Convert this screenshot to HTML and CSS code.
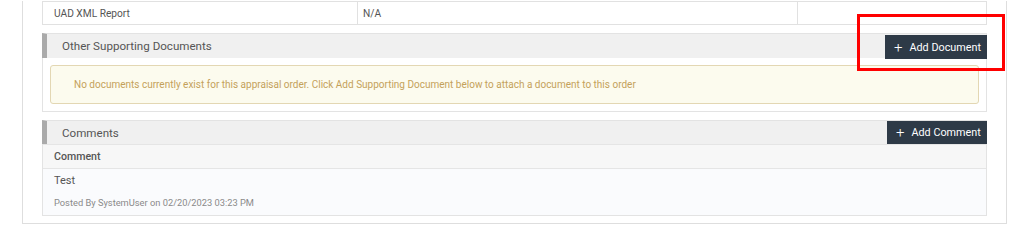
FILE: index.html
```html
<!DOCTYPE html>
<html>
<head>
<meta charset="utf-8">
<link rel="stylesheet" href="styles.css">
</head>
<body>
<div class="outer">
  <table class="docs">
    <tr>
      <td class="c1">UAD XML Report</td>
      <td class="c2">N/A</td>
      <td class="c3"></td>
    </tr>
  </table>

  <div class="panel docs-panel">
    <div class="panel-head">
      <span class="title">Other Supporting Documents</span>
      <button class="btn"><span class="plus">+</span>Add Document</button>
    </div>
    <div class="alert">No documents currently exist for this appraisal order. Click Add Supporting Document below to attach a document to this order</div>
  </div>

  <div class="panel comments-panel">
    <div class="panel-head">
      <span class="title">Comments</span>
      <button class="btn btn-comment"><span class="plus">+</span>Add Comment</button>
    </div>
    <div class="col-head">Comment</div>
    <div class="comment">
      <div class="comment-text">Test</div>
      <div class="comment-meta">Posted By SystemUser on 02/20/2023 03:23 PM</div>
    </div>
  </div>
</div>
<div class="highlight"></div>
</body>
</html>
```

FILE: styles.css
```css
html, body {
  margin: 0;
  padding: 0;
  background: #fff;
  font-family: Roboto, "Liberation Sans", Arial, sans-serif;
  color: #555;
}

.outer {
  margin-left: 22px;
  width: 945px;
  padding: 0 19px 7px 19px;
  border: 1px solid #dedede;
  border-top: none;
}

.docs {
  border-collapse: collapse;
  width: 945px;
  margin-top: 1px;
  font-size: 10.2px;
  table-layout: fixed;
}

.docs td {
  border: 1px solid #e1e1e1;
  height: 22px;
  padding: 0 0 0 11px;
  color: #555;
}

.docs .c1 { width: 303px; }
.docs .c2 { width: 434px; padding-left: 5px; }

.panel {
  margin-top: 8px;
  border: 1px solid #e3e3e3;
  background: #fff;
}

.panel-head {
  display: flex;
  align-items: stretch;
  justify-content: space-between;
  height: 24px;
  background: #f0f0f0;
  border-left: 5px solid #aaa;
  margin-left: -1px;
  margin-top: -1px;
  border-top: 1px solid #e3e3e3;
}

.title {
  display: flex;
  align-items: center;
  padding-left: 15px;
  font-size: 11.6px;
  color: #555;
}

.btn {
  display: flex;
  align-items: center;
  white-space: nowrap;
  border: none;
  margin: 0 -1px 0 0;
  padding: 0 0 0 9px;
  background: #2e3a47;
  color: #fff;
  font-family: Roboto, "Liberation Sans", Arial, sans-serif;
  font-size: 10.8px;
  width: 102px;
  box-sizing: border-box;
  height: 24px;
}

.btn-comment {
  width: 100px;
}

.plus {
  font-size: 15px;
  font-weight: 300;
  margin-right: 7px;
  line-height: 1;
}

.docs-panel .panel-head .btn {
  margin-top: 1px;
}

.alert {
  margin: 7px 7px 7px 7px;
  height: 37px;
  display: flex;
  align-items: center;
  padding-left: 23px;
  background: #fcfbee;
  border: 1px solid #e3d7b3;
  border-radius: 3px;
  color: #c4a15a;
  font-size: 10px;
}

.comments-panel .panel-head {
  height: 23px;
}

.comments-panel .btn {
  height: 23px;
}

.col-head {
  height: 23px;
  display: flex;
  align-items: center;
  padding-left: 11px;
  font-size: 10.6px;
  font-weight: 500;
  background: #f7f7f7;
  border-top: 1px solid #e5e5e5;
  border-bottom: 1px solid #e5e5e5;
  color: #555;
}

.comment {
  background: #fafbfd;
  padding: 5px 11px 6px 11px;
  height: 35px;
}

.comment-text {
  font-size: 11px;
  color: #555;
  line-height: 14px;
}

.comment-meta {
  margin-top: 9px;
  font-size: 9.3px;
  color: #8a8a8a;
  line-height: 12px;
}

.highlight {
  position: absolute;
  left: 857px;
  top: 14px;
  width: 142px;
  height: 51px;
  border: 3px solid #ff0000;
}
```
